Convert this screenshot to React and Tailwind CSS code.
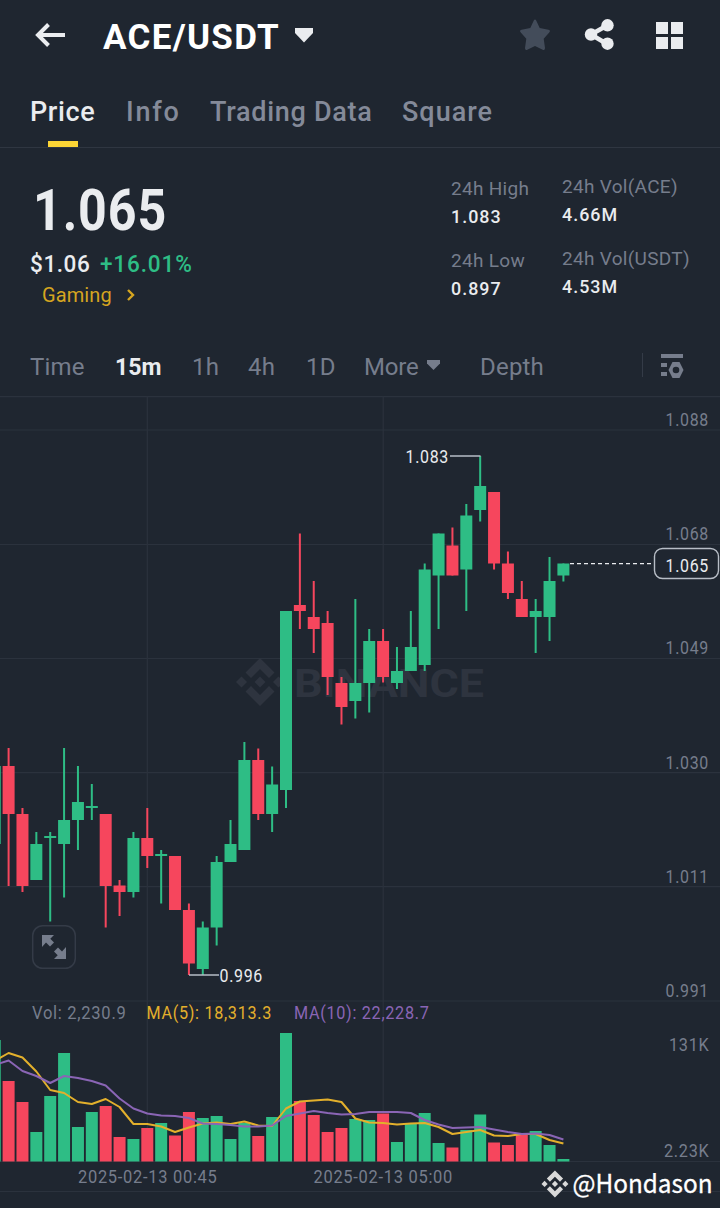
const UP = "#2ebd85";
const DOWN = "#f6465d";
const GRID = "#2b323d";
const MUTED = "#767d8c";

const STEP = 13.87;
const centerOf = (index) => 8.6 + STEP * index;

// [direction, high, bodyTop, bodyBottom, low, volumeTop]
const candles = [
  ["up", 766, 766, 844, 844, 1040],
  ["down", 748, 766, 814, 886, 1081],
  ["down", 808, 814, 886, 892, 1102],
  ["up", 832, 844, 880, 880, 1132],
  ["up", 832, 836, 838, 921.5, 1096],
  ["up", 748, 820, 844, 897.5, 1053],
  ["up", 766, 802, 820, 850, 1127],
  ["up", 784, 806, 808, 820, 1112],
  ["down", 814, 814, 886, 927.5, 1106],
  ["down", 880, 885.5, 892, 916, 1137],
  ["up", 832, 838, 892, 897.5, 1139],
  ["down", 808, 838, 856, 868, 1128],
  ["up", 850, 854, 856, 903.5, 1123],
  ["down", 856, 856, 910, 910, 1135.5],
  ["down", 903.5, 910, 963.5, 975, 1112],
  ["up", 921.5, 927.5, 969, 975, 1118],
  ["up", 856, 862, 927.5, 945.5, 1116],
  ["up", 820, 844, 862, 862, 1139],
  ["up", 742, 760, 850, 850, 1123],
  ["down", 748.5, 760, 814, 820, 1136],
  ["up", 766.5, 784.5, 814, 832, 1117],
  ["up", 611, 611, 790, 808, 1033],
  ["down", 533.5, 605, 611, 629, 1101],
  ["down", 581, 617, 629, 653, 1115],
  ["down", 611, 623, 677, 695, 1132],
  ["down", 677, 683, 707, 724.5, 1128],
  ["up", 599, 683, 701, 718.5, 1119],
  ["up", 629, 641, 683, 712.5, 1120],
  ["down", 629, 641, 677, 682.5, 1113.5],
  ["up", 647, 671, 683, 689, 1142],
  ["up", 611, 647, 671, 671, 1123.5],
  ["up", 563.5, 569.5, 665, 671, 1113],
  ["up", 533.5, 533.5, 575.5, 629, 1143],
  ["down", 527.5, 545.5, 575.5, 575.5, 1147.5],
  ["up", 504, 515.5, 569.5, 611, 1130],
  ["up", 456, 486, 510, 521.5, 1114.5],
  ["down", 492, 492, 563.5, 569.5, 1142.5],
  ["down", 551.5, 563.5, 593, 599, 1145],
  ["down", 581, 599, 617, 617, 1134.5],
  ["up", 599, 611, 617, 653, 1131],
  ["up", 557, 581, 617, 641, 1145],
  ["up", 563.5, 563.5, 575.5, 581.5, 1159],
];

const ma5 = [
  1061, 1053, 1057.5, 1071.5, 1090, 1093, 1102, 1104, 1099, 1107, 1124, 1124,
  1126.5, 1132, 1127.5, 1123.5, 1122.5, 1124, 1121.5, 1125.5, 1126, 1108.5,
  1101.5, 1100.5, 1099.5, 1102, 1118.5, 1122.5, 1123, 1124.5, 1123.5, 1123,
  1127, 1134, 1132, 1130, 1135.5, 1136, 1134, 1134, 1140, 1143.5,
];

const ma10 = [
  1065, 1060.5, 1071, 1076, 1083, 1076, 1078, 1081, 1085.5, 1098.5, 1108.5,
  1113.5, 1115.5, 1116, 1118, 1123.5, 1124, 1125, 1126.5, 1126.5, 1125.5, 1116,
  1113.5, 1111, 1113, 1114.5, 1114, 1112, 1112, 1112, 1113, 1120, 1124.5, 1128,
  1127.5, 1127, 1129.5, 1132, 1134, 1133.5, 1135, 1139.5,
];

const priceLabels = [
  ["1.088", 420],
  ["1.068", 534],
  ["1.049", 648],
  ["1.030", 763],
  ["1.011", 877],
  ["0.991", 991],
];

const toPoints = (values) =>
  values.map((value, index) => `${centerOf(index - 1)},${value}`).join(" ");

const Label = ({ x, y, width, fill = MUTED, size = 18.5, children }) => (
  <text
    x={x}
    y={y + 6}
    textLength={width}
    lengthAdjust="spacingAndGlyphs"
    fill={fill}
    fontSize={size}
    letterSpacing="0.8"
  >
    {children}
  </text>
);

// 48x48 diamond mark
const BinanceMark = () => (
  <>
    <path d="M24 0 38.5 14.5 33 20 24 11 15 20 9.5 14.5Z" />
    <path d="M24 48 38.5 33.5 33 28 24 37 15 28 9.5 33.5Z" />
    <path d="M5.5 18.5 11 24 5.5 29.5 0 24Z" />
    <path d="M42.5 18.5 48 24 42.5 29.5 37 24Z" />
    <path d="M24 18.5 29.5 24 24 29.5 18.5 24Z" />
  </>
);

const Header = () => (
  <header className="flex h-[70px] items-center">
    <svg className="ml-[34px]" width="32" height="26" viewBox="0 0 32 26" fill="none" stroke="#eaecef" strokeWidth="4">
      <path d="M31 13H4M14.5 2.5 4 13 14.5 23.5" />
    </svg>
    <h1 className="ml-[37px] mt-1 w-[177px] whitespace-nowrap text-[35px] font-bold leading-none tracking-[1.3px] text-white">
      ACE/USDT
    </h1>
    <svg className="ml-[15px]" width="18" height="15" viewBox="0 0 18 15" fill="#eaecef">
      <path d="M0 0H18V5L9 14.5 0 5Z" />
    </svg>
    <svg className="ml-[206px]" width="32" height="32" viewBox="0 0 32 32" fill="#434c5a">
      <path d="M14.8 1.5Q16 -.5 17.2 1.5L20.7 9 29.5 10.7Q32 11.5 30.2 13.5L24.7 19.7 26 29Q26 31.6 23.7 30.7L16 27 8.3 30.7Q6 31.6 6 29L7.3 19.7 1.8 13.5Q0 11.5 2.5 10.7L11.3 9Z" />
    </svg>
    <svg className="ml-[33px]" width="32" height="32" viewBox="0 0 32 32" fill="#eaecef">
      <path d="M23 6.5 7 15.5 23 25" fill="none" stroke="#eaecef" strokeWidth="4.5" />
      <circle cx="7" cy="15.5" r="6.2" />
      <circle cx="23.5" cy="6.3" r="6.2" />
      <circle cx="23.5" cy="24.7" r="6.2" />
    </svg>
    <div className="ml-10 grid grid-cols-2 gap-[3px]">
      <span className="size-3 bg-[#eaecef]" />
      <span className="size-3 bg-[#eaecef]" />
      <span className="size-3 bg-[#eaecef]" />
      <span className="size-3 bg-[#eaecef]" />
    </div>
  </header>
);

const Tabs = () => (
  <nav className="flex h-[78px] whitespace-nowrap border-b border-[#2f3641] pl-[30px] pt-[26px] text-[27px] font-medium leading-8 text-[#848a99]">
    <div className="flex w-[96px] flex-col text-[#eaecef]">
      <span className="tracking-[0.6px]">Price</span>
      <span className="ml-[18px] mt-[13px] h-1.5 w-[30px] shrink-0 bg-[#fcd535]" />
    </div>
    <span className="w-[84px] tracking-[1.8px]">Info</span>
    <span className="w-[192px] tracking-[0.7px]">Trading Data</span>
    <span className="tracking-[1px]">Square</span>
  </nav>
);

const Stat = ({ label, value }) => (
  <div className="h-[72px] whitespace-nowrap leading-7">
    <p className="text-[19px] tracking-[0.3px] text-[#767d8c]">{label}</p>
    <p className="origin-left scale-x-[0.94] text-[19px] font-medium tracking-[1.1px] text-[#eaecef]">{value}</p>
  </div>
);

const Summary = () => (
  <section className="flex h-[192px] pl-[30px]">
    <div className="w-[421px] pt-[35px]">
      <p className="ml-[3px] h-14 origin-left scale-x-[0.88] text-[57px] font-bold leading-[56px] tracking-[1px] text-[#eaecef]">
        1.065
      </p>
      <p className="mt-[11px] flex h-7 text-[24px] font-medium leading-7">
        <span className="w-[70px] origin-left scale-x-[0.94] tracking-[0.6px] text-[#eaecef]">$1.06</span>
        <span className="origin-left scale-x-[0.94] tracking-[0.9px] text-[#2ebd85]">+16.01%</span>
      </p>
      <p className="mt-[3px] flex items-center pl-3 text-[20px] leading-7 tracking-[0.1px] text-[#d5a520]">
        <span className="w-[85px]">Gaming</span>
        <svg width="8" height="12" viewBox="0 0 8 12" fill="none" stroke="#d5a520" strokeWidth="2.4">
          <path d="M1 1 6 6 1 11" />
        </svg>
      </p>
    </div>
    <div className="w-[111px] pt-[27px]">
      <Stat label="24h High" value="1.083" />
      <Stat label="24h Low" value="0.897" />
    </div>
    <div className="pt-[25px]">
      <Stat label="24h Vol(ACE)" value="4.66M" />
      <Stat label="24h Vol(USDT)" value="4.53M" />
    </div>
  </section>
);

const Intervals = () => (
  <nav className="flex h-14 items-center whitespace-nowrap pb-1 pl-[30px] pt-0.5 text-[24px] tracking-[0.2px] text-[#767d8c]">
    <span className="w-[85px]">Time</span>
    <span className="w-[77px] origin-left scale-x-[0.96] font-bold tracking-normal text-[#eaecef]">15m</span>
    <span className="w-14">1h</span>
    <span className="w-[58px]">4h</span>
    <span className="w-[58px]">1D</span>
    <span className="w-[63px] tracking-[-0.2px]">More</span>
    <svg className="-mt-1" width="13" height="10" viewBox="0 0 13 10" fill={MUTED}>
      <path d="M0 0H13V3.5L6.5 10 0 3.5Z" />
    </svg>
    <span className="ml-10 w-[162px]">Depth</span>
    <span className="-mt-1 h-6 w-px bg-[#343b47]" />
    <svg className="-mt-0.5 ml-[17px]" width="24" height="26" viewBox="0 0 24 26" fill={MUTED}>
      <path d="M1 1H23V5H1ZM1 10H7V14H1ZM1 19H7V23H1Z" />
      <path fillRule="evenodd" d="M12.5 9H19.5L23.5 17 19.5 25H12.5L8.5 17ZM16 13.7A3.3 3.3 0 1 0 16 20.3A3.3 3.3 0 1 0 16 13.7Z" />
    </svg>
  </nav>
);

const Chart = () => (
  <svg
    className="block font-['Roboto','Liberation_Sans',sans-serif]"
    width="720"
    height="812"
    viewBox="0 396 720 812"
  >
    <g stroke={GRID} strokeWidth="1.2">
      {[396.6, 430, 544.5, 658.5, 772.7, 886.7, 1001, 1161.5, 1191.5].map((y) => (
        <line key={y} x1="0" x2="720" y1={y} y2={y} />
      ))}
      <line x1="147.3" x2="147.3" y1="396" y2="1161" />
      <line x1="383.2" x2="383.2" y1="396" y2="1161" />
    </g>

    <g fill="#2e343f">
      <g transform="translate(236 658)">
        <BinanceMark />
      </g>
      <text x="294" y="697" fontSize="38" fontWeight="700" textLength="190" lengthAdjust="spacingAndGlyphs">
        BINANCE
      </text>
    </g>

    {candles.map(([direction, high, top, bottom, low, volumeTop], index) => {
      const x = centerOf(index - 1);
      const color = direction === "up" ? UP : DOWN;
      return (
        <g key={index} fill={color}>
          <rect x={x - 1} y={high} width="2" height={low - high} />
          <rect x={x - 6} y={top} width="12" height={bottom - top} />
          <rect x={x - 6} y={volumeTop} width="12" height={1161.5 - volumeTop} />
        </g>
      );
    })}

    <g fill="none" strokeWidth="2" strokeLinejoin="round">
      <polyline points={toPoints(ma5)} stroke="#e3b02c" />
      <polyline points={toPoints(ma10)} stroke="#8a65b5" />
    </g>

    <path d="M450 456H480.5M189 975H219" stroke="#b7bdc6" strokeWidth="1.5" />
    <Label x={405.5} y={457} width={43.5} fill="#eaecef">1.083</Label>
    <Label x={219.5} y={976} width={43.5} fill="#eaecef">0.996</Label>

    {priceLabels.map(([text, y]) => (
      <Label key={text} x={665.5} y={y} width={43.5}>{text}</Label>
    ))}
    <Label x={669} y={1045} width={40.5}>131K</Label>
    <Label x={664} y={1151} width={45.5}>2.23K</Label>

    <path d="M570 563.7H654" stroke="#eaecef" strokeWidth="1.2" strokeDasharray="4 3" />
    <rect x="654.5" y="548.5" width="64" height="30" rx="8" fill="#1f2630" stroke="#b7bdc6" strokeWidth="1.4" />
    <Label x={665.5} y={566} width={43.5} fill="#eaecef">1.065</Label>

    <Label x={32} y={1013} width={94.5}>Vol: 2,230.9</Label>
    <Label x={146.5} y={1013} width={125.5} fill="#e3b02c">MA(5): 18,313.3</Label>
    <Label x={294} y={1013} width={135.5} fill="#8a65b5">MA(10): 22,228.7</Label>

    <Label x={78} y={1177} width={139.5}>2025-02-13 00:45</Label>
    <Label x={313.5} y={1177} width={139.5}>2025-02-13 05:00</Label>

    <rect x="32.7" y="925.7" width="42.6" height="42.6" rx="10" fill="#1f2630" stroke="#343b47" strokeWidth="1.5" />
    <g fill={MUTED}>
      <path d="M42 935H54L50.3 938.7 54 942.5 50 946.5 46 942.5 42 947Z" />
      <path d="M66 959H54L57.7 955.3 54 951.5 58 947.5 62 951.5 66 947Z" />
    </g>

    <g fill="#d9d9d9" transform="translate(541.5 1170.5) scale(0.56)">
      <BinanceMark />
    </g>
    <text
      className="font-['Noto_Sans_CJK_SC','Noto_Sans',sans-serif]"
      x="572.5"
      y="1193"
      fontSize="25"
      fontWeight="400"
      fill="#ffffff"
      stroke="#ffffff"
      strokeWidth="0.3"
      textLength="140"
      lengthAdjust="spacingAndGlyphs"
    >
      @Hondason
    </text>
  </svg>
);

export default function App() {
  return (
    <main className="h-[1208px] w-[720px] overflow-hidden bg-[#1f2630] font-['Roboto','Liberation_Sans',sans-serif]">
      <Header />
      <Tabs />
      <Summary />
      <Intervals />
      <Chart />
    </main>
  );
}
